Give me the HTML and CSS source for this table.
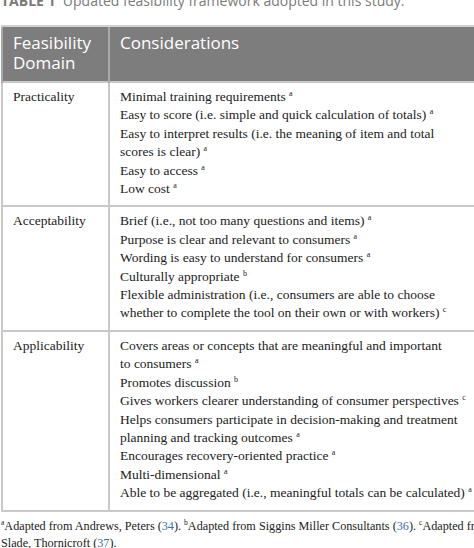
FILE: index.html
```html
<!DOCTYPE html>
<html>
<head>
<meta charset="utf-8">
<link rel="stylesheet" href="styles.css">
</head>
<body>
<div class="page">
  <p class="caption"><b>TABLE 1</b>&nbsp; Updated feasibility framework adopted in this study.</p>
  <table class="frame">
    <thead>
      <tr>
        <th class="col-domain">Feasibility Domain</th>
        <th class="col-cons">Considerations</th>
      </tr>
    </thead>
    <tbody>
      <tr>
        <td class="col-domain">Practicality</td>
        <td class="col-cons">
          <div>Minimal training requirements <sup>a</sup></div>
          <div>Easy to score (i.e. simple and quick calculation of totals) <sup>a</sup></div>
          <div>Easy to interpret results (i.e. the meaning of item and total<br>scores is clear) <sup>a</sup></div>
          <div>Easy to access <sup>a</sup></div>
          <div>Low cost <sup>a</sup></div>
        </td>
      </tr>
      <tr>
        <td class="col-domain">Acceptability</td>
        <td class="col-cons">
          <div>Brief (i.e., not too many questions and items) <sup>a</sup></div>
          <div>Purpose is clear and relevant to consumers <sup>a</sup></div>
          <div>Wording is easy to understand for consumers <sup>a</sup></div>
          <div>Culturally appropriate <sup>b</sup></div>
          <div>Flexible administration (i.e., consumers are able to choose<br>whether to complete the tool on their own or with workers) <sup>c</sup></div>
        </td>
      </tr>
      <tr>
        <td class="col-domain">Applicability</td>
        <td class="col-cons">
          <div>Covers areas or concepts that are meaningful and important<br>to consumers <sup>a</sup></div>
          <div>Promotes discussion <sup>b</sup></div>
          <div>Gives workers clearer understanding of consumer perspectives <sup>c</sup></div>
          <div>Helps consumers participate in decision-making and treatment<br>planning and tracking outcomes <sup>a</sup></div>
          <div>Encourages recovery-oriented practice <sup>a</sup></div>
          <div>Multi-dimensional <sup>a</sup></div>
          <div>Able to be aggregated (i.e., meaningful totals can be calculated) <sup>a</sup></div>
        </td>
      </tr>
    </tbody>
  </table>
  <p class="notes"><sup>a</sup>Adapted from Andrews, Peters (<span class="ref">34</span>). <sup>b</sup>Adapted from Siggins Miller Consultants (<span class="ref">36</span>). <sup>c</sup>Adapted from<br>Slade, Thornicroft (<span class="ref">37</span>).</p>
</div>
</body>
</html>
```
FILE: styles.css
```css
html, body {
  margin: 0;
  padding: 0;
  background: #ffffff;
  overflow: hidden;
}
.page {
  width: 474px;
  height: 548px;
  overflow: hidden;
  position: relative;
}
.caption {
  margin: -9px 0 0 1px;
  height: 34px;
  font-family: "Open Sans", sans-serif;
  font-size: 14px;
  color: #7a7a7a;
  white-space: nowrap;
}
.caption b {
  font-weight: 700;
}
.frame {
  border-collapse: collapse;
  width: 490px;
  margin-left: 1px;
  table-layout: fixed;
}
.frame th {
  background: #7d7d7d;
  color: #ffffff;
  font-family: "Open Sans", sans-serif;
  font-weight: 400;
  font-size: 17px;
  line-height: 20px;
  text-align: left;
  vertical-align: top;
  padding: 6px 10px 8px 10px;
  border-top: 2px solid #d0d0d0;
  border-left: 2px solid #a8a8a8;
}
.frame th.col-domain {
  width: 85px;
}
.frame td {
  font-family: "Liberation Serif", "Times New Roman", serif;
  font-size: 13.5px;
  line-height: 18.4px;
  color: #222222;
  vertical-align: top;
  padding: 5px 10px 7px 10px;
  border-top: 2px solid #c9c9c9;
  border-bottom: 2px solid #c9c9c9;
  border-left: 2px solid #c9c9c9;
  white-space: nowrap;
}
sup {
  font-size: 8px;
  line-height: 0;
  vertical-align: 5px;
}
.notes {
  margin: 6px 0 0 1px;
  font-family: "Liberation Serif", "Times New Roman", serif;
  font-size: 12.2px;
  line-height: 17px;
  color: #222222;
  white-space: nowrap;
}
.notes sup {
  font-size: 7.5px;
}
.ref {
  color: #3b6fb0;
}
```
